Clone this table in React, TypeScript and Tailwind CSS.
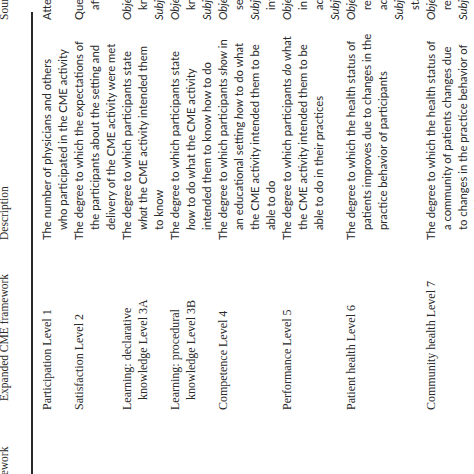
import type { ReactNode } from 'react';
import { clsx } from 'clsx';

// each cell is a list of paragraphs, each paragraph a list of printed lines
type Para = ReactNode[];

type Row = {
    framework: Para[];
    description: Para[];
    source: Para[];
};

const rows: Row[] = [
    {
        framework: [['Participation Level 1']],
        description: [['The number of physicians and others', 'who participated in the CME activity']],
        source: [['Attendance records']],
    },
    {
        framework: [['Satisfaction Level 2']],
        description: [[
            'The degree to which the expectations of',
            'the participants about the setting and',
            'delivery of the CME activity were met',
        ]],
        source: [['Questionnaires completed by attendees', 'after a CME activity']],
    },
    {
        framework: [['Learning: declarative', 'knowledge Level 3A']],
        description: [[
            'The degree to which participants state',
            <><i>what</i> the CME activity intended them</>,
            'to know',
        ]],
        source: [
            [<><i>Objective:</i> Pre- and posttests of</>, 'knowledge'],
            [<><i>Subjective:</i> Self-report of knowledge gain</>],
        ],
    },
    {
        framework: [['Learning: procedural', 'knowledge Level 3B']],
        description: [[
            'The degree to which participants state',
            <><i>how</i> to do what the CME activity</>,
            'intended them to know how to do',
        ]],
        source: [
            [<><i>Objective:</i> Pre- and posttests of</>, 'knowledge'],
            [<><i>Subjective:</i> Self-report of knowledge gain</>],
        ],
    },
    {
        framework: [['Competence Level 4']],
        description: [[
            <>The degree to which participants <i>show</i> in</>,
            <>an educational setting <i>how</i> to do what</>,
            'the CME activity intended them to be',
            'able to do',
        ]],
        source: [
            [<><i>Objective:</i> Observation in educational</>, 'setting'],
            [<><i>Subjective:</i> Self-report of competence;</>, 'intention to change'],
        ],
    },
    {
        framework: [['Performance Level 5']],
        description: [[
            <>The degree to which participants <i>do</i> what</>,
            'the CME activity intended them to be',
            'able to do in their practices',
        ]],
        source: [
            [
                <><i>Objective:</i> Observation of performance</>,
                'in patient care setting; patient charts;',
                'administrative databases',
            ],
            [<><i>Subjective:</i> Self-report of performance</>],
        ],
    },
    {
        framework: [['Patient health Level 6']],
        description: [[
            'The degree to which the health status of',
            'patients improves due to changes in the',
            'practice behavior of participants',
        ]],
        source: [
            [
                <><i>Objective:</i> Health status measures</>,
                'recorded in patient charts or',
                'administrative databases',
            ],
            [<><i>Subjective:</i> Patient self-report of health</>, 'status'],
        ],
    },
    {
        framework: [['Community health Level 7']],
        description: [[
            'The degree to which the health status of',
            'a community of patients changes due',
            'to changes in the practice behavior of',
            'participants',
        ]],
        source: [
            [<><i>Objective:</i> Epidemiological data and</>, 'reports'],
            [<><i>Subjective:</i> Community self-report</>],
        ],
    },
];

function Cell({ paras, className }: { paras: Para[]; className?: string }) {
    return (
        <div className={className}>
            {paras.map((lines, p) => (
                <div key={p}>
                    {lines.map((line, i) => (
                        <div key={i} className={clsx('whitespace-nowrap', i > 0 && 'pl-[10px]')}>
                            {line}
                        </div>
                    ))}
                </div>
            ))}
        </div>
    );
}

const body = "font-['Lato',sans-serif] text-[11.25px]";

export default function App() {
    return (
        <div className="h-[474px] w-[474px] overflow-hidden bg-white">
            {/* the table is set upright, then turned a quarter counter-clockwise */}
            <div className="w-[810px] origin-top-left [transform:translate(-4px,570px)_rotate(-90deg)] font-['Liberation_Serif',serif] text-[12px] leading-[16px] text-[#2a2a2a]">
                <div className="grid grid-cols-[160px_170px_220px_260px] pb-[19px] text-[11.5px]">
                    <div className="whitespace-nowrap pl-[4px]">Original CME framework</div>
                    <div className="whitespace-nowrap pl-[9px]">Expanded CME framework</div>
                    <div>Description</div>
                    <div className="whitespace-nowrap">Source of data</div>
                </div>
                <div className="h-[2px] w-[558px] bg-[#2a2a2a]" />
                <div className="grid grid-cols-[160px_170px_220px_260px] pt-[6px]">
                    {rows.map((row, r) => (
                        <div key={r} className="contents">
                            <div />
                            <Cell paras={row.framework} />
                            <Cell paras={row.description} className={body} />
                            <Cell paras={row.source} className={body} />
                        </div>
                    ))}
                </div>
            </div>
        </div>
    );
}
